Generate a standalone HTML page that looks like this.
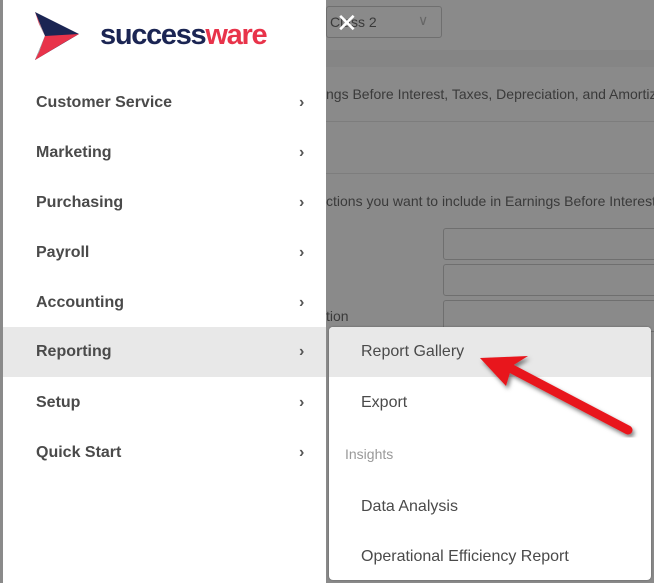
<!DOCTYPE html>
<html><head><style>
*{margin:0;padding:0;box-sizing:border-box}
body{width:654px;height:583px;overflow:hidden;background:#8a8a8a;font-family:"Liberation Sans",Arial,sans-serif;position:relative}
.abs{position:absolute}
.bgtxt{position:absolute;color:#3a3a3a;font-size:14px;white-space:nowrap}
.side{position:absolute;left:3px;top:0;width:323px;height:583px;background:#fff}
.item{position:absolute;left:0;width:323px;height:50px;font-weight:bold;font-size:16px;color:#4a4a4a;padding-left:33px;line-height:54px}
.item .ch{position:absolute;left:296px;top:0;font-size:16px;color:#555;font-weight:bold}
.sub{position:absolute;left:329px;top:327px;width:322px;height:253px;background:#fff;border-radius:4px;overflow:hidden;box-shadow:0 0 2px rgba(0,0,0,.3)}
.si{position:absolute;left:0;width:322px;height:50px;line-height:54px;padding-left:32px;font-size:16px;color:#4a4a4a}
</style></head><body>
<div class="abs" style="left:326px;top:6px;width:116px;height:32px;border:1px solid #6f6f6f;border-radius:3px"></div>
<div class="bgtxt" style="left:330px;top:14px">Class 2</div>
<div class="bgtxt" style="left:418px;top:12px;color:#666">&#8744;</div>
<div class="abs" style="left:326px;top:50px;width:328px;height:17px;background:#858585"></div>
<div class="abs" style="left:326px;top:121px;width:328px;height:1px;background:#7d7d7d"></div>
<div class="abs" style="left:326px;top:173px;width:328px;height:1px;background:#7d7d7d"></div>
<div class="bgtxt" style="left:326px;top:86px">ngs Before Interest, Taxes, Depreciation, and Amortiz</div>
<div class="bgtxt" style="left:326px;top:193px">ctions you want to include in Earnings Before Interest</div>
<div class="abs" style="left:443px;top:228px;width:215px;height:32px;border:1px solid #6f6f6f;border-radius:3px"></div>
<div class="abs" style="left:443px;top:264px;width:215px;height:32px;border:1px solid #6f6f6f;border-radius:3px"></div>
<div class="abs" style="left:443px;top:300px;width:215px;height:32px;border:1px solid #6f6f6f;border-radius:3px"></div>
<div class="bgtxt" style="left:326px;top:308px">tion</div>
<div class="abs" style="left:336px;top:8px;color:#fff;font-size:26px;line-height:30px">&#10005;</div>

<div class="side">
<svg class="abs" style="left:32px;top:12px" width="44" height="50" viewBox="0 0 44 50">
<polygon points="0,0 44,22 0,48 10,24" fill="#1b2553"/>
<polygon points="0,0 10,24 4,12" fill="#e8334a"/>
<polygon points="0,48 10,24 44,22 30,30" fill="#e8334a"/>
<polygon points="0,48 10,24 4,40" fill="#8fd3d0"/>
<polygon points="0,0 6,16 10,24 3,8" fill="#8fd3d0"/>
</svg>
<div class="abs" style="left:97px;top:19px;font-size:29px;font-weight:bold;letter-spacing:-1.3px;color:#1b2553">success<span style="color:#e8334a">ware</span></div>
<div class="item" style="top:76px">Customer Service<span class="ch">›</span></div>
<div class="item" style="top:126px">Marketing<span class="ch">›</span></div>
<div class="item" style="top:176px">Purchasing<span class="ch">›</span></div>
<div class="item" style="top:226px">Payroll<span class="ch">›</span></div>
<div class="item" style="top:276px">Accounting<span class="ch">›</span></div>
<div class="item" style="top:327px;background:#e8e8e8;line-height:50px">Reporting<span class="ch">›</span></div>
<div class="item" style="top:376px">Setup<span class="ch">›</span></div>
<div class="item" style="top:426px">Quick Start<span class="ch">›</span></div>
</div>

<div class="sub">
<div class="si" style="top:0;background:#e8e8e8;line-height:50px">Report Gallery</div>
<div class="si" style="top:49px">Export</div>
<div class="si" style="top:102px;padding-left:16px;font-size:14px;color:#999;line-height:50px">Insights</div>
<div class="si" style="top:153px">Data Analysis</div>
<div class="si" style="top:203px">Operational Efficiency Report</div>
</div>

<svg class="abs" style="left:470px;top:340px" width="180" height="110" viewBox="0 0 180 110">
<defs><filter id="s"><feDropShadow dx="2" dy="3" stdDeviation="2" flood-opacity=".5"/></filter></defs>
<g filter="url(#s)">
<line x1="158" y1="90" x2="40" y2="28" stroke="#e8141c" stroke-width="9" stroke-linecap="round"/>
<polygon points="10,18 58,16 42,26 36,46" fill="#e8141c"/>
</g>
</svg>
</body></html>
